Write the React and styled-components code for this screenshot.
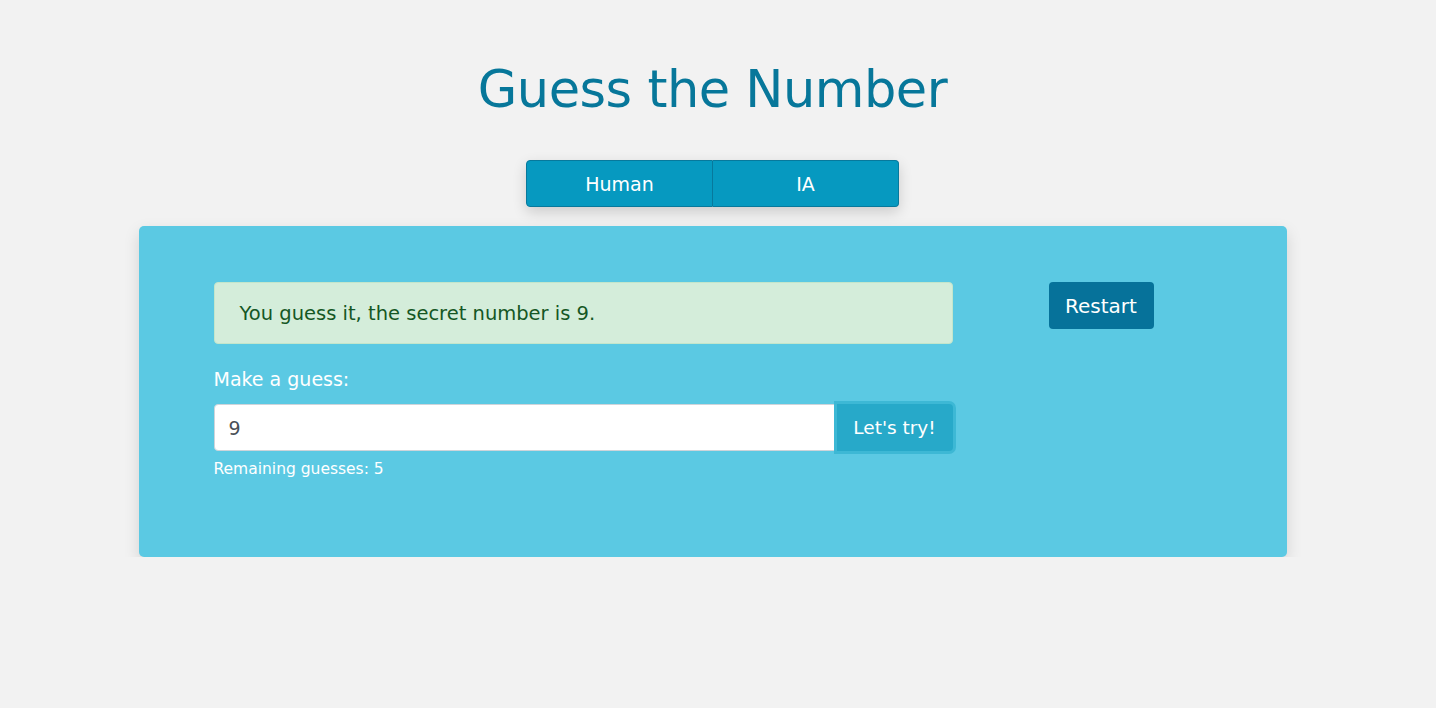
import React, { useState } from 'react';
import styled, { createGlobalStyle } from 'styled-components';

const GlobalStyle = createGlobalStyle`
  body {
    margin: 0;
    background: #f2f2f2;
    font-family: "DejaVu Sans", "Open Sans", sans-serif;
  }
`;

const Page = styled.div`
  display: flex;
  flex-direction: column;
  align-items: center;
  padding: 56px 11px 0 0;
`;

const Title = styled.h1`
  margin: 0;
  font-size: 51px;
  font-weight: 400;
  line-height: 68px;
  color: #07779a;
  letter-spacing: -0.5px;
`;

const ModeSwitch = styled.div`
  display: flex;
  margin-top: 36px;
  width: 373px;
  height: 47px;
  border-radius: 4px;
  box-shadow: 0 5px 14px rgba(0, 0, 0, 0.16);
`;

const ModeButton = styled.button`
  flex: 1;
  border: 1px solid #07799c;
  border-left-width: ${(p) => (p.$first ? '1px' : '0')};
  background: #0699c0;
  color: #fff;
  font-family: inherit;
  font-size: 19px;
  cursor: pointer;
  &:first-child {
    border-radius: 4px 0 0 4px;
  }
  &:last-child {
    border-radius: 0 4px 4px 0;
  }
`;

const Card = styled.section`
  box-sizing: border-box;
  width: 1148px;
  min-height: 331px;
  margin-top: 19px;
  padding: 56px 75px;
  background: #5bc9e3;
  border-radius: 5px;
  box-shadow: 0 6px 16px rgba(0, 0, 0, 0.13);
  display: flex;
  gap: 96px;
`;

const GameColumn = styled.div`
  width: 739px;
  display: flex;
  flex-direction: column;
`;

const Alert = styled.div`
  box-sizing: border-box;
  height: 62px;
  padding: 0 25px;
  display: flex;
  align-items: center;
  background: #d4edda;
  border: 1px solid #c3e6cb;
  border-radius: 4px;
  color: #155724;
  font-size: 19.5px;
`;

const Label = styled.label`
  margin-top: 23px;
  color: #fff;
  font-size: 19px;
  line-height: 24px;
`;

const InputGroup = styled.div`
  display: flex;
  margin-top: 13px;
  height: 47px;
`;

const GuessInput = styled.input`
  flex: 1;
  min-width: 0;
  box-sizing: border-box;
  border: 1px solid #ced4da;
  border-radius: 4px 0 0 4px;
  padding: 0 14px;
  font-family: inherit;
  font-size: 19px;
  color: #495057;
  background: #fff;
  outline: none;
`;

const TryButton = styled.button`
  box-sizing: border-box;
  width: 116px;
  margin-left: 2px;
  border: none;
  border-radius: 0 4px 4px 0;
  background: #27a9c9;
  color: #fff;
  font-family: inherit;
  font-size: 18.5px;
  box-shadow: 0 0 0 3px #3db8d5;
  cursor: pointer;
`;

const Hint = styled.small`
  margin-top: 9px;
  color: #fff;
  font-size: 15.5px;
`;

const RestartButton = styled.button`
  align-self: flex-start;
  width: 105px;
  height: 47px;
  padding: 0;
  border: none;
  border-radius: 4px;
  background: #06729a;
  color: #fff;
  font-family: inherit;
  font-size: 20px;
  cursor: pointer;
`;

export default function App() {
  const [guess, setGuess] = useState('9');

  return (
    <>
      <GlobalStyle />
      <Page>
        <Title>Guess the Number</Title>
        <ModeSwitch>
          <ModeButton $first>Human</ModeButton>
          <ModeButton>IA</ModeButton>
        </ModeSwitch>
        <Card>
          <GameColumn>
            <Alert>You guess it, the secret number is 9.</Alert>
            <Label htmlFor="guess">Make a guess:</Label>
            <InputGroup>
              <GuessInput id="guess" value={guess} onChange={(e) => setGuess(e.target.value)} />
              <TryButton>Let's try!</TryButton>
            </InputGroup>
            <Hint>Remaining guesses: 5</Hint>
          </GameColumn>
          <RestartButton>Restart</RestartButton>
        </Card>
      </Page>
    </>
  );
}
